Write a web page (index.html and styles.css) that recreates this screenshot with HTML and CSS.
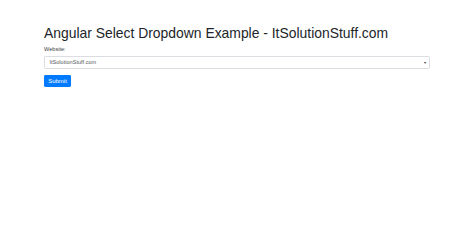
FILE: index.html
```html
<!DOCTYPE html>
<html>
<head>
<meta charset="utf-8">
<link rel="stylesheet" href="styles.css">
</head>
<body>
<div class="container">
  <h1 class="title">Angular Select Dropdown Example - ItSolutionStuff.com</h1>
  <form class="form">
    <div class="form-group">
      <label class="label">Website:</label>
      <div class="select">
        <span class="select-value">ItSolutionStuff.com</span>
        <span class="select-arrow">▾</span>
      </div>
    </div>
    <button class="btn" type="button">Submit</button>
  </form>
</div>
</body>
</html>
```
FILE: styles.css
```css
html, body {
  margin: 0;
  padding: 0;
  background: #fff;
}
body {
  font-family: "Liberation Sans", Arial, sans-serif;
  color: #212529;
}
.container {
  width: 386px;
  margin-left: 44px;
  padding-top: 25px;
}
.title {
  font-size: 13.9px;
  font-weight: 400;
  line-height: 16.8px;
  margin: 0 0 3px 0;
  white-space: nowrap;
}
.form {
  margin: 0;
}
.form-group {
  margin-bottom: 5.8px;
}
.label {
  display: block;
  font-size: 5.6px;
  font-weight: 400;
  line-height: 8.4px;
  margin-bottom: 2.6px;
  color: #3a3f44;
}
.select {
  box-sizing: border-box;
  height: 13px;
  border: 0.5px solid #dadee2;
  border-radius: 1.4px;
  display: flex;
  align-items: center;
  justify-content: space-between;
  padding: 0 3px 0 4.4px;
  font-size: 5.6px;
  color: #55595e;
}
.select-arrow {
  font-size: 4px;
  color: #444;
}
.btn {
  box-sizing: border-box;
  height: 12.4px;
  padding: 0 4.2px;
  border: 0;
  border-radius: 1.4px;
  background: #007bff;
  color: #fff;
  font-family: "Liberation Sans", Arial, sans-serif;
  font-size: 6px;
  line-height: 1;
  display: block;
}
```
